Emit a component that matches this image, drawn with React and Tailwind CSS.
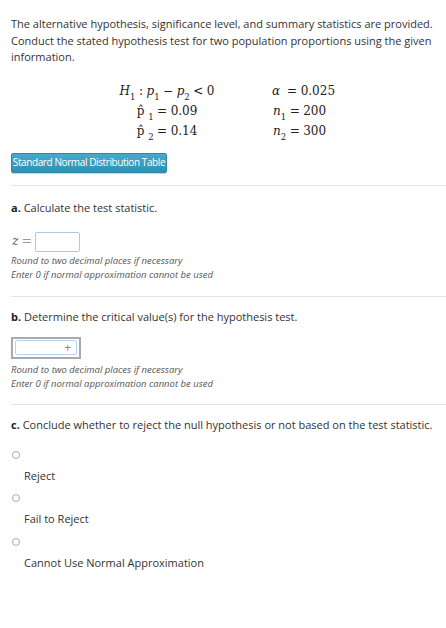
import React from "react";

const Sub = ({ children }) => (
  <sub className="text-[8.5px] align-[-3px] leading-none not-italic">{children}</sub>
);

const Op = ({ children }) => <span className="mx-[3.5px]">{children}</span>;

function Hints() {
  return (
    <div className="italic text-[9.5px] leading-[14px] text-[#555]">
      <div>Round to two decimal places if necessary</div>
      <div>Enter 0 if normal approximation cannot be used</div>
    </div>
  );
}

function Radio({ label }) {
  return (
    <div className="mb-[8.5px]">
      <div className="pl-[12px] h-[14px] flex items-center">
        <span className="w-[8px] h-[8px] rounded-full border border-[#aaa] bg-white inline-block" />
      </div>
      <div className="pl-[24px] mt-[7px] leading-[14px]">{label}</div>
    </div>
  );
}

export default function App() {
  return (
    <div
      className="w-[446px] h-[628px] bg-white text-[#333] text-[11px] overflow-hidden"
      style={{ fontFamily: '"Open Sans", sans-serif' }}
    >
      <div className="pl-[11px] pr-[6px] pt-[16px] leading-[16.5px]">
        The alternative hypothesis, significance level, and summary statistics are provided. Conduct the stated hypothesis test for two population proportions using the given information.
      </div>

      <div
        className="mt-[15px] flex text-[12px] leading-[20px] text-[#222]"
        style={{ fontFamily: '"DejaVu Serif", "Liberation Serif", serif' }}
      >
        <div className="ml-[74px] w-[186px] flex flex-col items-center">
          <div>
            <i>H</i><Sub>1</Sub><Op>:</Op><i>p</i><Sub>1</Sub><Op>−</Op><i>p</i><Sub>2</Sub><Op>&lt;</Op>0
          </div>
          <div>
            p̂ <Sub>1</Sub><Op>=</Op>0.09
          </div>
          <div>
            p̂ <Sub>2</Sub><Op>=</Op>0.14
          </div>
        </div>
        <div className="ml-[12px] flex flex-col items-start">
          <div><i>α</i><span className="ml-[7px] mr-[3.5px]">=</span>0.025</div>
          <div className="pl-[1px]"><i>n</i><Sub>1</Sub><Op>=</Op>200</div>
          <div className="pl-[1px]"><i>n</i><Sub>2</Sub><Op>=</Op>300</div>
        </div>
      </div>

      <div className="pl-[11px] mt-[12px]">
        <button
          className="h-[20px] w-[156px] rounded-[2px] text-white text-[10px] tracking-[-0.4px] bg-gradient-to-b from-[#47aacb] to-[#2f92b3] border border-[#2a88a8] shadow-[0_1px_1px_rgba(0,0,0,0.2)]"
          style={{ fontFamily: '"Open Sans", sans-serif' }}
        >
          Standard Normal Distribution Table
        </button>
      </div>

      <div className="ml-[11px] mt-[12px] border-t border-[#e6e6e6]" />

      <div className="pl-[11px] mt-[14px] leading-[16px]">
        <b className="text-[#222]">a.</b> Calculate the test statistic.
      </div>

      <div className="pl-[12px] mt-[16px] flex items-center">
        <span className="text-[#555] text-[12.5px]" style={{ fontFamily: '"DejaVu Serif", serif' }}>
          <i>z</i><span className="text-[#999] ml-[3px]">=</span>
        </span>
        <span className="ml-[3px] w-[45px] h-[20px] border border-[#a9c8ea] rounded-[2px] bg-white" />
      </div>

      <div className="pl-[11px] mt-[2px]">
        <Hints />
      </div>

      <div className="ml-[11px] mt-[14px] border-t border-[#e6e6e6]" />

      <div className="pl-[11px] mt-[12px] leading-[16px]">
        <b className="text-[#222]">b.</b> Determine the critical value(s) for the hypothesis test.
      </div>

      <div className="pl-[11px] mt-[12px]">
        <div className="w-[70px] h-[22px] border-2 border-[#aaa] flex items-center pl-[2px]">
          <div className="w-[62px] h-[15px] border border-[#b9d3ee] rounded-[2px] flex items-center justify-end pr-[5px] text-[#888] text-[12px] leading-none">
            +
          </div>
        </div>
      </div>

      <div className="pl-[11px] mt-[4px]">
        <Hints />
      </div>

      <div className="ml-[11px] mt-[13px] border-t border-[#e6e6e6]" />

      <div className="pl-[11px] mt-[12px] leading-[16px]">
        <b className="text-[#222]">c.</b> Conclude whether to reject the null hypothesis or not based on the test statistic.
      </div>

      <div className="mt-[15px]">
        <Radio label="Reject" />
        <Radio label="Fail to Reject" />
        <Radio label="Cannot Use Normal Approximation" />
      </div>
    </div>
  );
}
